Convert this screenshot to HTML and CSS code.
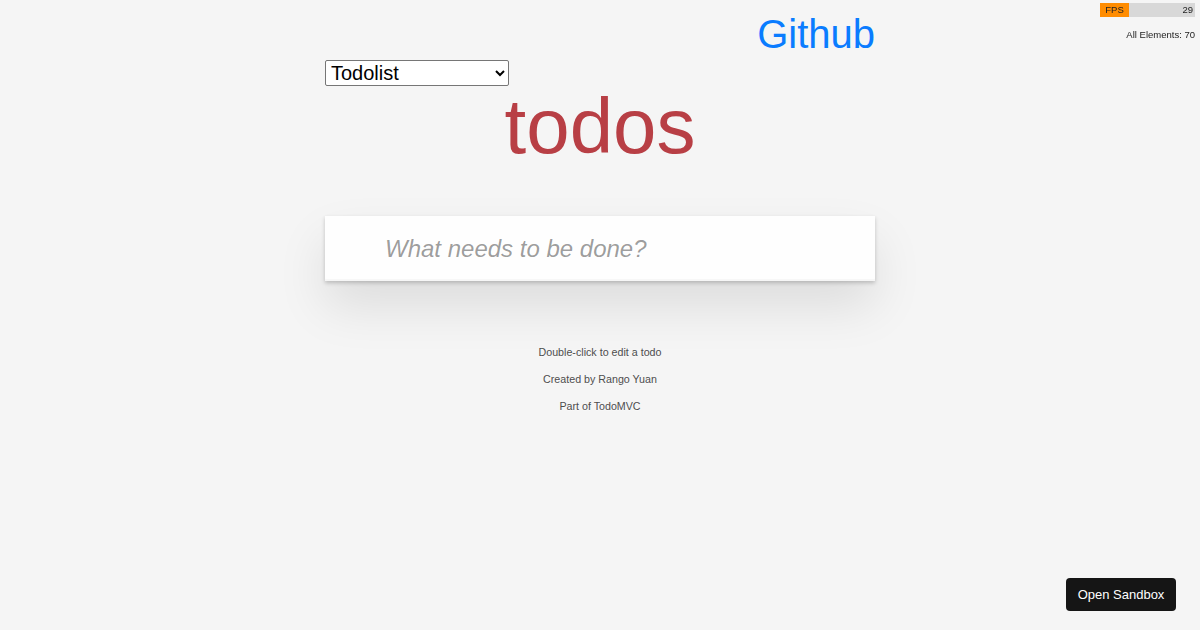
FILE: index.html
```html
<!DOCTYPE html>
<html lang="en">
<head>
<meta charset="utf-8">
<title>todos</title>
<link rel="stylesheet" href="styles.css">
</head>
<body>
<div class="page">
  <div class="github-row"><a class="github" href="#">Github</a></div>
  <select class="demo-select">
    <option>Todolist</option>
  </select>
  <h1 class="title">todos</h1>
  <section class="todoapp">
    <input class="new-todo" placeholder="What needs to be done?">
  </section>
  <footer class="info">
    <p>Double-click to edit a todo</p>
    <p>Created by Rango Yuan</p>
    <p>Part of TodoMVC</p>
  </footer>
</div>

<div class="perf">
  <div class="fps"><span class="fps-label">FPS</span><span class="fps-bar">29</span></div>
  <div class="elements">All Elements: 70</div>
</div>

<button class="sandbox">Open Sandbox</button>
</body>
</html>
```
FILE: styles.css
```css
html, body {
  margin: 0;
  padding: 0;
}
body {
  background: #f5f5f5;
  color: #4d4d4d;
  font: 14px "Liberation Sans", Arial, Helvetica, sans-serif;
  height: 630px;
  overflow: hidden;
}
.page {
  width: 550px;
  margin: 0 auto;
  display: flex;
  flex-direction: column;
}
.github-row {
  padding-top: 11px;
  text-align: right;
  line-height: 47px;
  height: 47px;
}
.github {
  font-size: 40px;
  color: #0a7cff;
  text-decoration: none;
}
.demo-select {
  margin-top: 2px;
  width: 184px;
  height: 26px;
  font: 20px "Liberation Sans", Arial, sans-serif;
  color: #000;
  background: #fff;
  border: 1px solid #767676;
  border-radius: 2px;
  padding: 0 1px;
  align-self: flex-start;
}
.title {
  margin: 0;
  font-size: 78px;
  line-height: 80px;
  font-weight: 200;
  text-align: center;
  color: #b83f45;
}
.todoapp {
  margin-top: 50px;
  background: #fff;
  box-shadow: 0 2px 4px rgba(0, 0, 0, 0.2), 0 25px 50px rgba(0, 0, 0, 0.1);
}
.new-todo {
  display: block;
  box-sizing: border-box;
  width: 100%;
  height: 65px;
  margin: 0;
  padding: 16px 16px 16px 60px;
  border: none;
  background: rgba(0, 0, 0, 0.003);
  box-shadow: inset 0 -2px 1px rgba(0, 0, 0, 0.03);
  font: 24px/1.4em "Liberation Sans", Arial, sans-serif;
  color: #4d4d4d;
  outline: none;
}
.new-todo::placeholder {
  font-style: italic;
  color: rgba(0, 0, 0, 0.4);
}
.info {
  margin-top: 66px;
  display: flex;
  flex-direction: column;
  gap: 16px;
  font-size: 10.7px;
  text-align: center;
  color: #4d4d4d;
  text-shadow: 0 1px 0 rgba(255, 255, 255, 0.5);
}
.info p {
  margin: 0;
  line-height: 11px;
}
.perf {
  position: fixed;
  top: 3px;
  right: 5px;
  width: 95px;
  font-family: "Liberation Sans", Arial, sans-serif;
  font-size: 9.5px;
  color: #222;
}
.fps {
  display: flex;
  height: 14px;
  line-height: 14px;
}
.fps-label {
  width: 29px;
  background: #ff8c00;
  text-align: center;
}
.fps-bar {
  flex: 1;
  background: #d8d8d8;
  text-align: right;
  padding-right: 2px;
}
.elements {
  margin-top: 12px;
  text-align: right;
}
.sandbox {
  position: fixed;
  right: 24px;
  bottom: 19px;
  width: 110px;
  height: 33px;
  border: none;
  border-radius: 4px;
  background: #151515;
  color: #fff;
  font: 13px "Liberation Sans", Arial, sans-serif;
  padding: 0;
}
```
